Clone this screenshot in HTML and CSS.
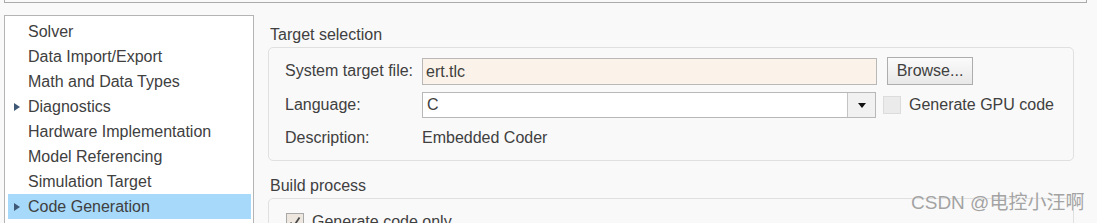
FILE: index.html
```html
<!DOCTYPE html>
<html>
<head>
<meta charset="utf-8">
<link rel="stylesheet" href="styles.css">
</head>
<body>
<div class="topbar"></div>
<div class="main">
  <div class="tree">
    <div class="item"><span class="twisty"></span>Solver</div>
    <div class="item"><span class="twisty"></span>Data Import/Export</div>
    <div class="item"><span class="twisty"></span>Math and Data Types</div>
    <div class="item"><span class="twisty"><i class="tri"></i></span>Diagnostics</div>
    <div class="item"><span class="twisty"></span>Hardware Implementation</div>
    <div class="item"><span class="twisty"></span>Model Referencing</div>
    <div class="item"><span class="twisty"></span>Simulation Target</div>
    <div class="item sel"><span class="twisty"><i class="tri"></i></span>Code Generation</div>
  </div>
  <div class="panel">
    <div class="title first">Target selection</div>
    <div class="group g1">
      <div class="row">
        <span class="label">System target file:</span>
        <div class="input">ert.tlc</div>
        <div class="button">Browse...</div>
      </div>
      <div class="row r2">
        <span class="label">Language:</span>
        <div class="select"><span class="sel-text">C</span><span class="arrow"><i></i></span></div>
        <span class="cb empty"></span>
        <span class="cb-label">Generate GPU code</span>
      </div>
      <div class="row r3">
        <span class="label">Description:</span>
        <span class="value">Embedded Coder</span>
      </div>
    </div>
    <div class="title second">Build process</div>
    <div class="group g2">
      <div class="row">
        <span class="cb checked"><svg width="16" height="16" viewBox="0 0 16 16"><path d="M3.5 8.5 L6.5 12.5 L12.5 3.5" fill="none" stroke="#4a4a4a" stroke-width="1.8"/></svg></span>
        <span class="cb-label">Generate code only</span>
      </div>
    </div>
  </div>
</div>
<div class="watermark">CSDN @电控小汪啊</div>
</body>
</html>
```
FILE: styles.css
```css
html, body {
  margin: 0;
  padding: 0;
}
body {
  width: 1097px;
  height: 223px;
  overflow: hidden;
  background: #f9f9f9;
  font-family: "Liberation Sans", Arial, sans-serif;
  font-size: 16px;
  color: #404040;
  position: relative;
}
.topbar {
  margin-left: 4px;
  width: 1081px;
  height: 2px;
  border: 1px solid #ababab;
  border-top: none;
}
.main {
  display: flex;
  gap: 14px;
  margin-top: 12px;
  padding-left: 4px;
}
.tree {
  width: 243px;
  height: 300px;
  border: 1px solid #b4b4b4;
  background: #ffffff;
  padding: 3px 2px 0 3px;
  flex: none;
}
.item {
  display: flex;
  align-items: center;
  height: 25px;
  line-height: 25px;
  white-space: nowrap;
}
.item.sel {
  background: #a6d9fa;
}
.twisty {
  width: 20px;
  height: 25px;
  flex: none;
  display: flex;
  align-items: center;
}
.tri {
  display: block;
  margin-left: 6px;
  margin-top: 1px;
  width: 0;
  height: 0;
  border-left: 6px solid #3e5875;
  border-top: 4px solid transparent;
  border-bottom: 4px solid transparent;
}
.panel {
  width: 806px;
  flex: none;
}
.title {
  line-height: 25px;
  padding-left: 2px;
}
.title.first {
  padding-top: 7px;
}
.title.second {
  padding-top: 12px;
}
.group {
  border: 1px solid #e0e0e0;
  border-radius: 5px;
  padding-left: 16px;
}
.g1 {
  padding-top: 9px;
  padding-bottom: 10px;
}
.g2 {
  padding-top: 14px;
  height: 60px;
}
.row {
  display: flex;
  align-items: center;
}
.label {
  width: 137px;
  flex: none;
  white-space: nowrap;
}
.input {
  width: 450px;
  height: 25px;
  line-height: 25px;
  border: 1px solid #b8b8b8;
  background: #fbf2e9;
  padding-left: 3px;
  flex: none;
}
.button {
  margin-left: 10px;
  width: 84px;
  height: 26px;
  line-height: 26px;
  text-align: center;
  border: 1px solid #adadad;
  background: linear-gradient(#fbfbfb, #e8e8e8);
  flex: none;
}
.r2 {
  margin-top: 7px;
}
.select {
  width: 452px;
  height: 24px;
  border: 1px solid #b8b8b8;
  background: #ffffff;
  display: flex;
  flex: none;
}
.sel-text {
  flex: 1;
  line-height: 24px;
  padding-left: 4px;
}
.arrow {
  width: 27px;
  border-left: 1px solid #c4c4c4;
  background: #f1f1f1;
  display: flex;
  align-items: center;
  justify-content: center;
}
.arrow i {
  display: block;
  width: 0;
  height: 0;
  border-top: 5px solid #111;
  border-left: 4px solid transparent;
  border-right: 4px solid transparent;
}
.cb {
  width: 16px;
  height: 16px;
  flex: none;
  display: flex;
  align-items: center;
  justify-content: center;
}
.cb.empty {
  margin-left: 7px;
  border: 1px solid #dcdcdc;
  background: #ebebeb;
}
.cb.checked {
  margin-left: 1px;
  border: 1px solid #a8a8a8;
  background: #ede7e0;
}
.cb-label {
  margin-left: 8px;
  white-space: nowrap;
}
.r3 {
  margin-top: 8px;
  line-height: 24px;
}
.watermark {
  position: absolute;
  left: 911px;
  top: 192px;
  font-family: "Liberation Sans", "Noto Sans CJK SC", sans-serif;
  font-size: 19px;
  line-height: 22px;
  color: #a3a3a3;
  white-space: nowrap;
  text-shadow: 0 0 1px #ffffff;
}
```
